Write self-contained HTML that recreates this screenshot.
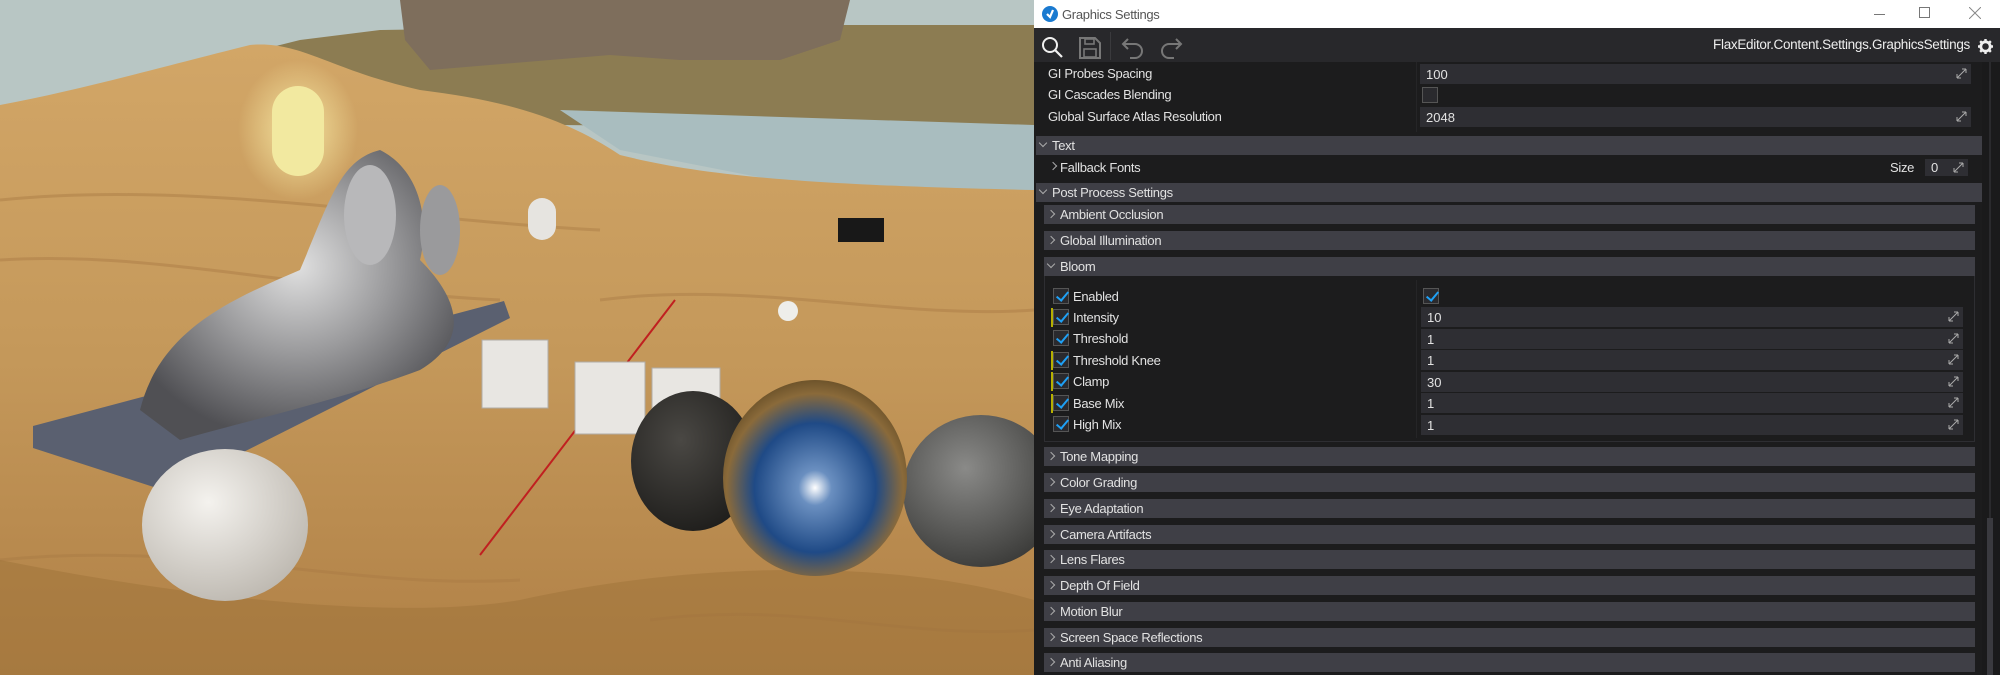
<!DOCTYPE html>
<html><head><meta charset="utf-8"><style>
*{margin:0;padding:0;box-sizing:border-box}
body{width:2000px;height:675px;overflow:hidden;position:relative;background:#1c1c1d;font-family:"Liberation Sans",sans-serif;font-size:13px;color:#e2e2e2}
.a{position:absolute}
.scene{left:0;top:0;width:1034px;height:675px;overflow:hidden;background:#c09050}
.panel{left:1034px;top:0;width:966px;height:675px;background:#1c1c1d}
.t{position:absolute;white-space:nowrap;letter-spacing:-0.3px}
.hdr{position:absolute;background:#3f3f46;height:19px}
.hdr span{position:absolute;left:16px;top:2px;white-space:nowrap;letter-spacing:-0.3px}
.hdr i{position:absolute;left:4px;top:6px;width:6px;height:6px;border-right:1px solid #aaa;border-bottom:1px solid #aaa;transform:rotate(-45deg)}
.hdr i.d{transform:rotate(45deg);top:4px}
.box{position:absolute;background:#2e2e33;height:20px}
.box span{position:absolute;left:6px;top:3px}
.rs{position:absolute;right:4px;top:4px;width:11px;height:11px}
.cb{position:absolute;width:16px;height:16px;border:1px solid #555;background:#2a2a2e}
.cb:after{content:"";position:absolute;left:5px;top:0px;width:5px;height:10px;border-right:2px solid #1ea0f5;border-bottom:2px solid #1ea0f5;transform:rotate(40deg)}
.cb.off:after{display:none}
.yb{position:absolute;width:2px;height:19px;background:#b6b000}
</style></head><body>
<div class="a scene">
<svg width="1034" height="675" viewBox="0 0 1034 675">
<defs>
<radialGradient id="ws" cx="0.4" cy="0.35" r="0.7"><stop offset="0" stop-color="#f4f2ee"/><stop offset="1" stop-color="#bdb8b0"/></radialGradient>
<radialGradient id="cs" cx="0.5" cy="0.55" r="0.6"><stop offset="0" stop-color="#ffffff"/><stop offset="0.15" stop-color="#6a8fc0"/><stop offset="0.55" stop-color="#1f4a86"/><stop offset="0.8" stop-color="#8a6a3a"/><stop offset="1" stop-color="#5a4420"/></radialGradient>
<radialGradient id="ds" cx="0.4" cy="0.35" r="0.7"><stop offset="0" stop-color="#4a4844"/><stop offset="1" stop-color="#1e1d1b"/></radialGradient>
<radialGradient id="gs" cx="0.4" cy="0.35" r="0.7"><stop offset="0" stop-color="#8a8a88"/><stop offset="1" stop-color="#3a3a38"/></radialGradient>
<radialGradient id="st" cx="0.5" cy="0.4" r="0.6"><stop offset="0" stop-color="#e0e0e0"/><stop offset="0.5" stop-color="#9a9a9c"/><stop offset="1" stop-color="#505054"/></radialGradient>
<radialGradient id="gl" cx="0.5" cy="0.5" r="0.5"><stop offset="0" stop-color="#fff6b0" stop-opacity="0.8"/><stop offset="1" stop-color="#fff6b0" stop-opacity="0"/></radialGradient>
<linearGradient id="sand" x1="0" y1="0" x2="0" y2="1"><stop offset="0" stop-color="#d2a667"/><stop offset="0.5" stop-color="#c4985a"/><stop offset="1" stop-color="#b08046"/></linearGradient>
</defs>
<rect width="1034" height="675" fill="#b8c6c4"/>
<polygon points="140,80 300,40 380,30 700,25 1034,25 1034,130 560,125" fill="#8c7c52"/>
<polygon points="400,0 850,0 840,40 780,60 680,60 610,55 430,70 405,40" fill="#7e6e5c"/>
<polygon points="560,110 1034,125 1034,195 850,195 620,150" fill="#a9bdbf"/>
<path d="M0,105 C80,90 150,70 250,45 C300,40 330,70 420,90 C500,100 560,115 620,155 C700,175 800,185 1034,190 L1034,675 L0,675 Z" fill="url(#sand)"/>
<g stroke="#a87a44" stroke-width="3" fill="none" opacity="0.45"><path d="M0,200 C200,180 400,220 600,230"/><path d="M0,260 C150,250 300,290 500,300"/><path d="M600,300 C750,280 900,320 1034,310"/><path d="M0,560 C200,540 350,590 520,580"/><path d="M650,620 C800,600 900,640 1034,630"/></g>
<path d="M0,560 C200,600 400,620 520,600 C700,560 900,560 1034,600 L1034,675 L0,675Z" fill="#9c7038" opacity="0.45"/>
<ellipse cx="298" cy="130" rx="60" ry="70" fill="url(#gl)"/>
<rect x="272" y="86" width="52" height="90" rx="26" fill="#f2e9a0"/>
<polygon points="33,426 504,301 510,318 166,491 33,448" fill="#5a6070"/>
<path d="M140,410 C160,330 230,300 300,270 C330,200 340,160 380,150 C420,170 430,220 420,260 C460,300 470,340 420,370 C340,400 250,420 180,440 Z" fill="url(#st)"/>
<ellipse cx="370" cy="215" rx="26" ry="50" fill="#b8b8ba"/>
<ellipse cx="440" cy="230" rx="20" ry="45" fill="#9a9a9c"/>
<rect x="528" y="198" width="28" height="42" rx="14" fill="#e6e4e0"/>
<path d="M480,555 L675,300" stroke="#c02020" stroke-width="2"/>
<g fill="#e8e6e2" stroke="#b0aca6"><rect x="482" y="340" width="66" height="68"/><rect x="575" y="362" width="70" height="72"/><rect x="652" y="368" width="68" height="60"/></g>
<ellipse cx="225" cy="525" rx="83" ry="76" fill="url(#ws)"/>
<ellipse cx="693" cy="461" rx="62" ry="70" fill="url(#ds)"/>
<ellipse cx="981" cy="491" rx="78" ry="76" fill="url(#gs)"/>
<ellipse cx="815" cy="478" rx="92" ry="98" fill="url(#cs)"/>
<ellipse cx="788" cy="311" rx="10" ry="10" fill="#eeeeea"/>
<rect x="838" y="218" width="46" height="24" fill="#181818"/>
</svg>
</div>

<div class="a panel">
<div class="a" style="left:0;top:0;width:966px;height:28px;background:#fff"></div>
<svg class="a" style="left:8px;top:6px" width="16" height="16" viewBox="0 0 16 16"><circle cx="8" cy="8" r="8" fill="#1a7ad0"/><path d="M5 8 L8 11 L11 4" stroke="#fff" stroke-width="2.2" fill="none"/></svg>
<div class="t" style="left:28px;top:7px;color:#555">Graphics Settings</div>
<div class="a" style="left:840px;top:14px;width:11px;height:1px;background:#777"></div>
<div class="a" style="left:885px;top:7px;width:11px;height:11px;border:1px solid #777"></div>
<svg class="a" style="left:935px;top:7px" width="12" height="12"><path d="M0 0L12 12M12 0L0 12" stroke="#888" stroke-width="1"/></svg>
<div class="a" style="left:0;top:28px;width:966px;height:34px;background:#28282b"></div>
<svg class="a" style="left:6px;top:36px" width="26" height="24" viewBox="0 0 26 24"><circle cx="10" cy="9" r="7" stroke="#f0f0f0" stroke-width="2" fill="none"/><path d="M15 14 L22 21" stroke="#f0f0f0" stroke-width="2.2"/></svg>
<svg class="a" style="left:44px;top:36px" width="24" height="24" viewBox="0 0 24 24"><path d="M2 2H17L22 7V22H2Z" stroke="#777" stroke-width="2" fill="none"/><rect x="7" y="3" width="9" height="5" stroke="#777" stroke-width="1.6" fill="none"/><rect x="6" y="13" width="12" height="8" stroke="#777" stroke-width="1.6" fill="none"/></svg>
<div class="a" style="left:76px;top:32px;width:1px;height:28px;background:#3a3a3d"></div>
<svg class="a" style="left:86px;top:36px" width="26" height="24" viewBox="0 0 26 24"><path d="M8 3 L3 8 L8 13 M3 8 H15 A7 7 0 0 1 15 22 H10" stroke="#777" stroke-width="2" fill="none"/></svg>
<svg class="a" style="left:124px;top:36px" width="26" height="24" viewBox="0 0 26 24"><path d="M18 3 L23 8 L18 13 M23 8 H11 A7 7 0 0 0 11 22 H16" stroke="#777" stroke-width="2" fill="none"/></svg>
<div class="t" style="right:30px;top:37px;font-size:13.5px;color:#eee">FlaxEditor.Content.Settings.GraphicsSettings</div>
<svg class="a" style="left:944px;top:39px" width="15" height="15" viewBox="0 0 16 16"><circle cx="8" cy="8" r="5" fill="none" stroke="#eee" stroke-width="3"/><g stroke="#eee" stroke-width="2.6"><path d="M8 0V3M8 13V16M0 8H3M13 8H16M2.3 2.3L4.4 4.4M11.6 11.6L13.7 13.7M2.3 13.7L4.4 11.6M11.6 4.4L13.7 2.3"/></g></svg>
<div class="a" style="left:948px;top:62px;width:18px;height:613px;background:#1a1a1b"></div>
<div class="a" style="left:955px;top:62px;width:2px;height:613px;background:#2a2a2d"></div>
<div class="a" style="left:953px;top:518px;width:6px;height:157px;background:#3a3a3f"></div>

<div class="t" style="left:14px;top:66px">GI Probes Spacing</div>
<div class="box" style="left:386px;top:64px;width:551px"><span>100</span><svg class="rs" viewBox="0 0 11 11"><path d="M1 10L10 1M1 10V6M1 10H5M10 1V5M10 1H6" stroke="#aaa" fill="none"/></svg></div>
<div class="t" style="left:14px;top:87px">GI Cascades Blending</div>
<div class="cb off" style="left:388px;top:87px"></div>
<div class="t" style="left:14px;top:109px">Global Surface Atlas Resolution</div>
<div class="box" style="left:386px;top:107px;width:551px"><span>2048</span><svg class="rs" viewBox="0 0 11 11"><path d="M1 10L10 1M1 10V6M1 10H5M10 1V5M10 1H6" stroke="#aaa" fill="none"/></svg></div>
<div class="a" style="left:382px;top:62px;width:1px;height:70px;background:#252527"></div>

<div class="hdr" style="left:2px;top:136px;width:946px"><i class="d"></i><span>Text</span></div>
<div class="t" style="left:16px;top:163px;width:6px;height:6px;border-right:1px solid #aaa;border-bottom:1px solid #aaa;transform:rotate(-45deg)"></div>
<div class="t" style="left:26px;top:160px">Fallback Fonts</div>
<div class="t" style="left:856px;top:160px">Size</div>
<div class="box" style="left:891px;top:159px;width:43px;height:17px"><span style="top:1px">0</span><svg class="rs" style="top:3px" viewBox="0 0 11 11"><path d="M1 10L10 1M1 10V6M1 10H5M10 1V5M10 1H6" stroke="#aaa" fill="none"/></svg></div>
<div class="hdr" style="left:2px;top:183px;width:946px"><i class="d"></i><span>Post Process Settings</span></div>

<div class="hdr" style="left:10px;top:205px;width:931px"><i></i><span>Ambient Occlusion</span></div>
<div class="hdr" style="left:10px;top:231px;width:931px"><i></i><span>Global Illumination</span></div>
<div class="hdr" style="left:10px;top:257px;width:931px"><i class="d"></i><span>Bloom</span></div>
<div class="a" style="left:10px;top:276px;width:931px;height:166px;border:1px solid #2e2e32;border-top:none"></div>
<div class="a" style="left:382px;top:280px;width:1px;height:158px;background:#252527"></div>

<div class="cb" style="left:19px;top:288px"></div><div class="t" style="left:39px;top:289px">Enabled</div>
<div class="cb" style="left:389px;top:288px"></div>

<div class="yb" style="left:17px;top:308px"></div><div class="cb" style="left:19px;top:309px"></div><div class="t" style="left:39px;top:310px">Intensity</div>
<div class="box" style="left:387px;top:307px;width:542px"><span>10</span><svg class="rs" viewBox="0 0 11 11"><path d="M1 10L10 1M1 10V6M1 10H5M10 1V5M10 1H6" stroke="#aaa" fill="none"/></svg></div>
<div class="cb" style="left:19px;top:330px"></div><div class="t" style="left:39px;top:331px">Threshold</div>
<div class="box" style="left:387px;top:329px;width:542px"><span>1</span><svg class="rs" viewBox="0 0 11 11"><path d="M1 10L10 1M1 10V6M1 10H5M10 1V5M10 1H6" stroke="#aaa" fill="none"/></svg></div>
<div class="yb" style="left:17px;top:351px"></div><div class="cb" style="left:19px;top:352px"></div><div class="t" style="left:39px;top:353px">Threshold Knee</div>
<div class="box" style="left:387px;top:350px;width:542px"><span>1</span><svg class="rs" viewBox="0 0 11 11"><path d="M1 10L10 1M1 10V6M1 10H5M10 1V5M10 1H6" stroke="#aaa" fill="none"/></svg></div>
<div class="yb" style="left:17px;top:372px"></div><div class="cb" style="left:19px;top:373px"></div><div class="t" style="left:39px;top:374px">Clamp</div>
<div class="box" style="left:387px;top:372px;width:542px"><span>30</span><svg class="rs" viewBox="0 0 11 11"><path d="M1 10L10 1M1 10V6M1 10H5M10 1V5M10 1H6" stroke="#aaa" fill="none"/></svg></div>
<div class="yb" style="left:17px;top:394px"></div><div class="cb" style="left:19px;top:395px"></div><div class="t" style="left:39px;top:396px">Base Mix</div>
<div class="box" style="left:387px;top:393px;width:542px"><span>1</span><svg class="rs" viewBox="0 0 11 11"><path d="M1 10L10 1M1 10V6M1 10H5M10 1V5M10 1H6" stroke="#aaa" fill="none"/></svg></div>
<div class="cb" style="left:19px;top:416px"></div><div class="t" style="left:39px;top:417px">High Mix</div>
<div class="box" style="left:387px;top:415px;width:542px"><span>1</span><svg class="rs" viewBox="0 0 11 11"><path d="M1 10L10 1M1 10V6M1 10H5M10 1V5M10 1H6" stroke="#aaa" fill="none"/></svg></div>

<div class="hdr" style="left:10px;top:447px;width:931px"><i></i><span>Tone Mapping</span></div>
<div class="hdr" style="left:10px;top:473px;width:931px"><i></i><span>Color Grading</span></div>
<div class="hdr" style="left:10px;top:499px;width:931px"><i></i><span>Eye Adaptation</span></div>
<div class="hdr" style="left:10px;top:525px;width:931px"><i></i><span>Camera Artifacts</span></div>
<div class="hdr" style="left:10px;top:550px;width:931px"><i></i><span>Lens Flares</span></div>
<div class="hdr" style="left:10px;top:576px;width:931px"><i></i><span>Depth Of Field</span></div>
<div class="hdr" style="left:10px;top:602px;width:931px"><i></i><span>Motion Blur</span></div>
<div class="hdr" style="left:10px;top:628px;width:931px"><i></i><span>Screen Space Reflections</span></div>
<div class="hdr" style="left:10px;top:653px;width:931px"><i></i><span>Anti Aliasing</span></div>
</div>
</body></html>
